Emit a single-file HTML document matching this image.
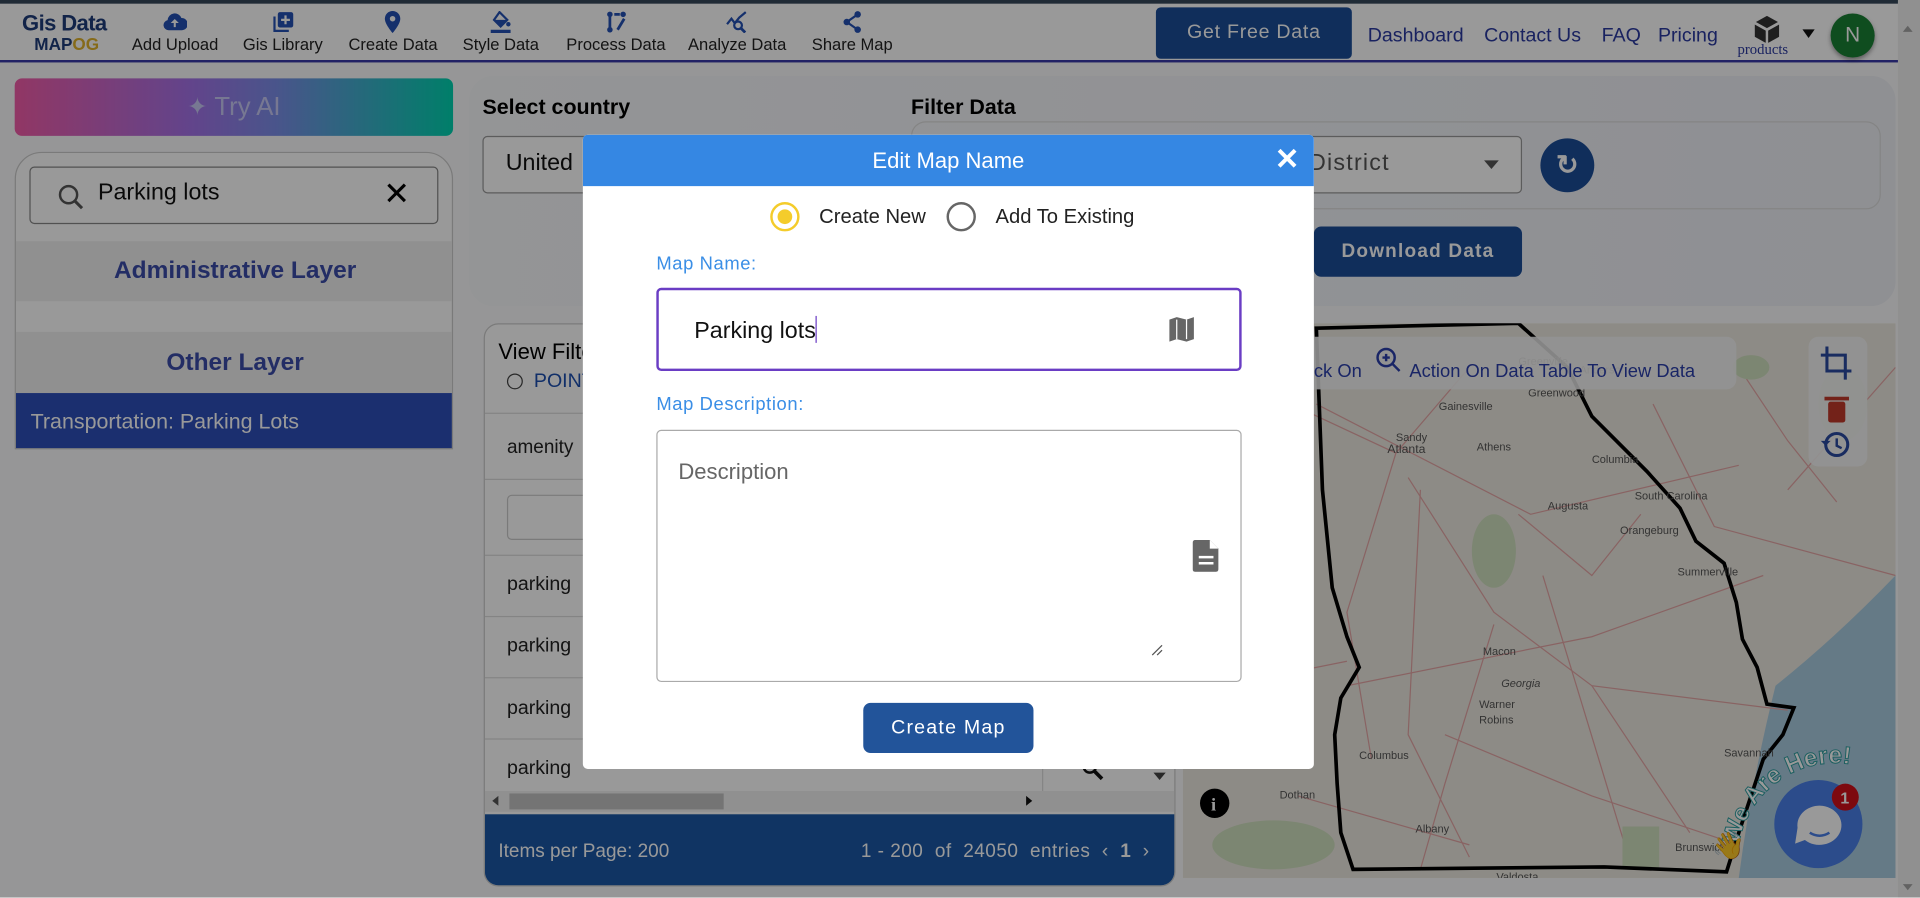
<!DOCTYPE html>
<html><head><meta charset="utf-8"><style>
*{box-sizing:border-box;margin:0;padding:0}
html,body{width:1920px;height:898px;overflow:hidden;background:#fff;font-family:"Liberation Sans",sans-serif}
#s{position:absolute;left:0;top:0;width:1568px;height:733px;transform:scale(1.22449);transform-origin:0 0;background:#fbfbfc}
.a{position:absolute}
.nav{left:0;top:0;width:1550px;height:51px;background:#fff;border-top:3px solid #36495a;border-bottom:2px solid #3a3aa8}
.ni{position:absolute;top:6px;text-align:center;font-size:13.5px;color:#222;white-space:nowrap;transform:translateX(-50%)}
.ni svg{display:block;margin:0 auto 2px}
.lk{position:absolute;top:18px;font-size:16px;color:#2b3aa0}
.ov{left:0;top:0;width:1568px;height:733px;background:rgba(0,0,0,.4)}
</style></head><body><div id="s">
<!-- NAV -->
<div class="a nav">
 <div class="a" style="left:18px;top:6px;font:bold 18px 'Liberation Sans Narrow','Liberation Sans',sans-serif;color:#1f3c7a;letter-spacing:-.5px">Gis Data</div>
 <div class="a" style="left:28px;top:25px;font:bold 14px 'Liberation Sans',sans-serif;color:#1f3c7a">MAP<span style="color:#e0b22c">OG</span></div>
 <div class="ni" style="left:143px"><svg width="20" height="18" viewBox="0 0 24 20"><path d="M6 18a5 5 0 0 1-1-9.9A7 7 0 0 1 18.5 6 5 5 0 0 1 19 18z" fill="#2451b5"/><path d="M12 7l-4 4h3v4h2v-4h3z" fill="#fff"/></svg>Add Upload</div>
 <div class="ni" style="left:231px"><svg width="18" height="18" viewBox="0 0 20 20"><rect x="5" y="1" width="14" height="14" rx="2" fill="#2451b5"/><path d="M2 5v13h13" stroke="#2451b5" stroke-width="2" fill="none"/><path d="M12 4v8M8 8h8" stroke="#fff" stroke-width="2"/></svg>Gis Library</div>
 <div class="ni" style="left:321px"><svg width="14" height="18" viewBox="0 0 14 20"><path d="M7 0a7 7 0 0 1 7 7c0 5-7 13-7 13S0 12 0 7a7 7 0 0 1 7-7z" fill="#2451b5"/><circle cx="7" cy="7" r="2.5" fill="#fff"/></svg>Create Data</div>
 <div class="ni" style="left:409px"><svg width="20" height="18" viewBox="0 0 20 20"><path d="M9 1l7 7-6 6-6-6z" fill="none" stroke="#2451b5" stroke-width="2"/><path d="M4 8h12l-6 6z" fill="#2451b5"/><circle cx="17" cy="12" r="2" fill="#2451b5"/><rect x="1" y="17" width="18" height="3" fill="#2451b5"/></svg>Style Data</div>
 <div class="ni" style="left:503px"><svg width="18" height="18" viewBox="0 0 20 20"><circle cx="4" cy="3" r="2.5" fill="#2451b5"/><circle cx="4" cy="17" r="2.5" fill="#2451b5"/><circle cx="16" cy="3" r="2.5" fill="#2451b5"/><path d="M4 5v10M8 3h5M17 7l-6 10" stroke="#2451b5" stroke-width="2.5"/></svg>Process Data</div>
 <div class="ni" style="left:602px"><svg width="20" height="18" viewBox="0 0 20 20"><path d="M1 12l4-5 3 4 4-5 6-5" stroke="#2451b5" stroke-width="2" fill="none"/><circle cx="11" cy="13" r="3.5" stroke="#2451b5" stroke-width="2" fill="none"/><path d="M13.5 15.5l4 4" stroke="#2451b5" stroke-width="2.5"/></svg>Analyze Data</div>
 <div class="ni" style="left:696px"><svg width="16" height="18" viewBox="0 0 18 20"><circle cx="14" cy="3" r="3" fill="#2451b5"/><circle cx="4" cy="10" r="3" fill="#2451b5"/><circle cx="14" cy="17" r="3" fill="#2451b5"/><path d="M14 3L4 10l10 7" stroke="#2451b5" stroke-width="2" fill="none"/></svg>Share Map</div>
 <div class="a" style="left:944px;top:3px;width:160px;height:42px;background:#1b4d98;border-radius:4px;color:#fff;font-size:16px;letter-spacing:.6px;text-align:center;line-height:42px">Get Free Data</div>
 <div class="lk" style="left:1117px">Dashboard</div><div class="lk" style="left:1212px">Contact Us</div><div class="lk" style="left:1308px">FAQ</div><div class="lk" style="left:1354px">Pricing</div>
 <svg class="a" style="left:1433px;top:10px" width="20" height="22" viewBox="0 0 20 22"><path d="M10 0l9 5-9 5-9-5z" fill="#333"/><path d="M0 7l9 5v10L0 17z" fill="#333"/><path d="M20 7l-9 5v10l9-5z" fill="#333"/></svg>
 <div class="a" style="left:1419px;top:30px;font:12px 'Liberation Serif',serif;color:#2b3aa0">products</div>
 <div class="a" style="left:1472px;top:21px;border:5px solid transparent;border-top:7px solid #111"></div>
 <div class="a" style="left:1495px;top:8px;width:36px;height:36px;border-radius:50%;background:#1a8034;color:#fff;font-size:17px;text-align:center;line-height:36px;box-shadow:0 2px 4px rgba(0,0,0,.4)">N</div>
</div>
<!-- scrollbar -->
<div class="a" style="left:1550px;top:0;width:18px;height:733px;background:#f1f1f1"></div>
<div class="a" style="left:1554px;top:17px;border:4px solid transparent;border-bottom:5px solid #a3a3a3"></div>
<div class="a" style="left:1554px;top:722px;border:4px solid transparent;border-top:5px solid #a3a3a3"></div>
<!-- LEFT -->
<div class="a" style="left:12px;top:64px;width:358px;height:47px;border-radius:6px;background:linear-gradient(90deg,#f25ca8,#a472e8 40%,#7a8ee8 60%,#00d3b0);color:#c6c8f4;font-size:21px;text-align:center;line-height:47px"><span style="font-size:20px">✦</span> Try AI</div>
<div class="a" style="left:12px;top:124px;width:358px;height:243px;border:1px solid #ccc;border-radius:22px 22px 0 0;background:#fff;overflow:hidden">
 <div class="a" style="left:11px;top:11px;width:334px;height:47px;border:1px solid #888;border-radius:4px"></div>
 <svg class="a" style="left:34px;top:25px" width="22" height="22" viewBox="0 0 22 22"><circle cx="9" cy="9" r="7" stroke="#555" stroke-width="2" fill="none"/><path d="M14 14l6 6" stroke="#555" stroke-width="2.5"/></svg>
 <div class="a" style="left:67px;top:22px;font-size:19px;color:#111">Parking lots</div>
 <div class="a" style="left:300px;top:18px;font-size:26px;color:#000">✕</div>
 <div class="a" style="left:0;top:72px;width:358px;height:49px;background:#f0f0f0;text-align:center;line-height:49px;font-size:20px;font-weight:bold;color:#3b4ca8">Administrative Layer</div>
 <div class="a" style="left:0;top:146px;width:358px;height:50px;background:#f0f0f0;text-align:center;line-height:50px;font-size:20px;font-weight:bold;color:#3b4ca8">Other Layer</div>
 <div class="a" style="left:0;top:196px;width:358px;height:46px;background:#2e4fba;color:#fff;font-size:17.5px;line-height:46px;padding-left:12px">Transportation: Parking Lots</div>
</div>
<!-- TOP MIDDLE -->
<div class="a" style="left:383px;top:62px;width:1165px;height:188px;border-radius:20px;background:linear-gradient(90deg,#f7f8fb,#eef0f6)"></div>
<div class="a" style="left:394px;top:77px;font-size:17.5px;font-weight:bold;color:#000">Select country</div>
<div class="a" style="left:394px;top:111px;width:200px;height:47px;border:1px solid #999;border-radius:4px;background:#fff;font-size:19px;padding:11px 18px;color:#111">United</div>
<div class="a" style="left:744px;top:77px;font-size:17.5px;font-weight:bold;color:#000">Filter Data</div>
<div class="a" style="left:744px;top:99px;width:792px;height:72px;border:1px solid #ddd;border-radius:12px"></div>
<div class="a" style="left:1060px;top:111px;width:183px;height:47px;border:1px solid #999;border-radius:4px;background:#fff;font-size:19px;padding:11px 8px;color:#555;letter-spacing:1px">District</div>
<div class="a" style="left:1212px;top:131px;border:6px solid transparent;border-top:7px solid #555"></div>
<div class="a" style="left:1258px;top:113px;width:44px;height:44px;border-radius:50%;background:#1b4d98;color:#fff;font-size:22px;text-align:center;line-height:44px;font-weight:bold">↻</div>
<div class="a" style="left:1073px;top:185px;width:170px;height:41px;border-radius:6px;background:#1b4d98;color:#fff;font-size:15.5px;font-weight:bold;letter-spacing:1px;text-align:center;line-height:41px">Download Data</div>
<!-- TABLE -->
<div class="a" style="left:395px;top:264px;width:565px;height:460px;border:1px solid #ccc;border-radius:12px;background:#fff;overflow:hidden">
 <div class="a" style="left:11px;top:12px;font-size:18px;color:#000">View Filter</div>
 <div class="a" style="left:18px;top:40px;width:13px;height:13px;border:1.5px solid #444;border-radius:50%"></div>
 <div class="a" style="left:40px;top:38px;font-size:16px;color:#1d4fb0">POINT</div>
 <div class="a" style="left:0;top:72px;width:565px;border-top:1px solid #ddd"></div>
 <div class="a" style="left:18px;top:92px;font-size:15.5px;color:#222">amenity</div>
 <div class="a" style="left:0;top:126px;width:565px;border-top:1px solid #ddd"></div>
 <div class="a" style="left:18px;top:139px;width:200px;height:37px;border:1px solid #ccc;border-radius:4px"></div>
 <div class="a" style="left:0;top:188px;width:565px;border-top:1px solid #ddd"></div>
 <div class="a" style="left:18px;top:204px;font-size:16px;color:#222">parking</div>
 <div class="a" style="left:0;top:238px;width:565px;border-top:1px solid #ddd"></div>
 <div class="a" style="left:18px;top:254px;font-size:16px;color:#222">parking</div>
 <div class="a" style="left:0;top:288px;width:565px;border-top:1px solid #ddd"></div>
 <div class="a" style="left:18px;top:305px;font-size:16px;color:#222">parking</div>
 <div class="a" style="left:0;top:338px;width:565px;border-top:1px solid #ddd"></div>
 <div class="a" style="left:18px;top:354px;font-size:16px;color:#222">parking</div>
 <div class="a" style="left:455px;top:338px;height:60px;border-left:1px solid #ddd"></div>
 <svg class="a" style="left:487px;top:356px" width="20" height="18" viewBox="0 0 20 18"><circle cx="7" cy="5" r="5" stroke="#111" stroke-width="2" fill="none"/><path d="M11 9l6 6" stroke="#111" stroke-width="3"/></svg>
 <div class="a" style="left:546px;top:366px;border:5px solid transparent;border-top:6px solid #444"></div>
 <div class="a" style="left:0;top:381px;width:565px;height:17px;background:#f1f1f1"></div>
 <div class="a" style="left:20px;top:383px;width:175px;height:13px;background:#c1c1c1"></div>
 <div class="a" style="left:6px;top:385px;border:4px solid transparent;border-right:5px solid #555;border-left:0"></div>
 <div class="a" style="left:442px;top:385px;border:4px solid transparent;border-left:5px solid #111;border-right:0"></div>
 <div class="a" style="left:0;top:400px;width:565px;height:60px;background:#1b58a6;color:#fff;font-size:15.5px">
  <div class="a" style="left:11px;top:22px">Items per Page: 200</div>
  <div class="a" style="left:307px;top:22px;letter-spacing:.4px">1 - 200 &nbsp;of &nbsp;24050 &nbsp;entries &nbsp;‹ &nbsp;<b>1</b> &nbsp;›</div>
 </div>
</div>
<!-- MAP -->
<svg class="a" style="left:966px;top:264px" width="582" height="453" viewBox="966 264 582 453">
 <rect x="966" y="264" width="582" height="453" fill="#ece8df"/>
 <path d="M1450 560 Q1500 520 1548 470 L1548 717 L1420 717 Q1430 640 1450 560z" fill="#a9cbe0"/>
 <g stroke="#e4a6a6" stroke-width="1" fill="none">
  <path d="M1075 330 L1250 420 L1420 380"/><path d="M1150 390 L1220 500 L1300 560 L1460 580"/><path d="M1100 560 L1300 520 L1440 470"/><path d="M1180 600 L1300 650 L1420 690"/><path d="M1160 400 L1150 600 L1200 700"/><path d="M1260 470 L1330 700"/><path d="M1350 330 L1400 430 L1548 470"/><path d="M1460 400 L1548 300"/><path d="M1060 650 L1200 690"/>
  <path d="M990 300 L1140 370 L1200 300"/><path d="M1140 370 L1100 500 L1120 620"/><path d="M1220 510 L1180 640 L1160 710"/><path d="M1000 560 L1100 540"/><path d="M1300 560 L1380 680"/><path d="M1240 420 L1300 470 L1340 420"/><path d="M1420 300 L1460 360 L1500 410"/>
 </g>
 <g fill="#cfe0bf"><ellipse cx="1220" cy="450" rx="18" ry="30"/><ellipse cx="1505" cy="330" rx="20" ry="30"/><rect x="1325" y="675" width="30" height="35"/><ellipse cx="1040" cy="690" rx="50" ry="20"/><ellipse cx="1000" cy="600" rx="25" ry="12"/><ellipse cx="1430" cy="300" rx="15" ry="10"/></g>
 <path d="M1075 268 L1240 264 L1280 300 L1300 340 L1345 385 L1372 415 L1385 442 L1408 460 L1418 492 L1423 522 L1435 545 L1443 575 L1465 578 L1456 600 L1440 620 L1430 650 L1420 680 L1410 712 L1310 708 L1105 710 L1095 680 L1092 640 L1090 600 L1095 570 L1110 545 L1100 520 L1088 480 L1080 400z" fill="none" stroke="#000" stroke-width="3"/>
 <g font-family="Liberation Sans,sans-serif" font-size="10" fill="#555">
  <text x="1133" y="370">Atlanta</text><text x="1206" y="368" font-size="9">Athens</text><text x="1175" y="335" font-size="9">Gainesville</text><text x="1140" y="360" font-size="9">Sandy</text><text x="1248" y="324" font-size="9">Greenwood</text><text x="1290" y="305" font-size="9">Anderson</text><text x="1300" y="378" font-size="9">Columbia</text><text x="1335" y="408" font-size="9">South Carolina</text><text x="1323" y="436" font-size="9">Orangeburg</text><text x="1370" y="470" font-size="9">Summerville</text><text x="1264" y="416" font-size="9">Augusta</text><text x="1211" y="535" font-size="9">Macon</text><text x="1226" y="561" font-size="9" font-style="italic">Georgia</text><text x="1208" y="578" font-size="9">Warner</text><text x="1208" y="591" font-size="9">Robins</text><text x="1110" y="620" font-size="9">Columbus</text><text x="1156" y="680" font-size="9">Albany</text><text x="1045" y="652" font-size="9">Dothan</text><text x="1222" y="719" font-size="9">Valdosta</text><text x="1408" y="618" font-size="9">Savannah</text><text x="1368" y="695" font-size="9">Brunswick</text><text x="1240" y="298" font-size="9">Greenville</text>
 </g>
 <rect x="1040" y="275" width="378" height="43" rx="8" fill="#f5f5f5" opacity=".9"/>
 <text x="1073" y="308" font-family="Liberation Sans,sans-serif" font-size="15" fill="#2b3eaa">ck On</text>
 <circle cx="1132" cy="292" r="7" stroke="#2b3eaa" stroke-width="2" fill="none"/><path d="M1137 297l6 6M1129 292h6M1132 289v6" stroke="#2b3eaa" stroke-width="2"/>
 <text x="1151" y="308" font-family="Liberation Sans,sans-serif" font-size="15" fill="#2b3eaa">Action On Data Table To View Data</text>
 <rect x="1477" y="275" width="48" height="106" rx="8" fill="#f5f5f5" opacity=".9"/>
 <path d="M1492 283v20h20M1487 290h20v20" stroke="#2b4aa0" stroke-width="2.5" fill="none"/>
 <rect x="1493" y="328" width="14" height="17" rx="2" fill="#c0392b"/><rect x="1490" y="324" width="20" height="3" fill="#c0392b"/>
 <circle cx="1500" cy="363" r="9" stroke="#2b4aa0" stroke-width="2.5" fill="none"/><path d="M1500 358v6l4 2" stroke="#2b4aa0" stroke-width="2" fill="none"/><path d="M1487 360l4 4 4-4" fill="#2b4aa0"/>
 <circle cx="992" cy="656" r="12" fill="#000"/><text x="989" y="662" font-family="Liberation Serif,serif" font-weight="bold" font-size="15" fill="#fff">i</text>
 <circle cx="1485" cy="673" r="36" fill="#4a7fe8"/>
 <path d="M1468 676a18 16 0 1 1 6 10l-8 3z" fill="#fff"/><path d="M1478 680q8 5 16 0" stroke="#4a7fe8" stroke-width="2" fill="none"/>
 <circle cx="1507" cy="651" r="11" fill="#d0101a"/><text x="1503" y="656" font-family="Liberation Sans,sans-serif" font-size="13" font-weight="bold" fill="#fff">1</text>
 <path id="cv" d="M1420 690 A80 80 0 0 1 1548 640" fill="none"/>
 <text font-family="Liberation Sans,sans-serif" font-size="20" font-weight="bold" fill="#fff" stroke="#2f9fa0" stroke-width=".8"><textPath href="#cv">We Are Here!</textPath></text>
 <text x="1398" y="698" font-size="22">👋</text>
</svg>
<!-- overlay -->
<div class="a ov"></div>
<!-- MODAL -->
<div class="a" style="left:476px;top:110px;width:597px;height:518px;background:#fff;border-radius:4px;overflow:hidden">
 <div class="a" style="left:0;top:0;width:597px;height:42px;background:#3587e3;color:#fff;font-size:18px;text-align:center;line-height:42px">Edit Map Name</div>
 <div class="a" style="left:565px;top:6px;color:#fff;font-size:24px;font-weight:bold">✕</div>
 <div class="a" style="left:153px;top:55px;width:24px;height:24px;border:2px solid #f4cc2b;border-radius:50%"><div style="margin:4px;width:12px;height:12px;border-radius:50%;background:#f4cc2b"></div></div>
 <div class="a" style="left:193px;top:58px;font-size:16.5px;color:#222">Create New</div>
 <div class="a" style="left:297px;top:55px;width:24px;height:24px;border:2px solid #666;border-radius:50%"></div>
 <div class="a" style="left:337px;top:58px;font-size:16.5px;color:#222">Add To Existing</div>
 <div class="a" style="left:60px;top:97px;font-size:15px;color:#3a8ee6;letter-spacing:.5px">Map Name:</div>
 <div class="a" style="left:60px;top:125px;width:478px;height:68px;border:2px solid #6a3dc4;border-radius:4px"></div>
 <div class="a" style="left:91px;top:148px;font-size:19px;color:#111">Parking lots<span style="display:inline-block;width:1px;height:22px;background:#6a3dc4;vertical-align:-4px"></span></div>
 <svg class="a" style="left:478px;top:148px" width="22" height="22" viewBox="0 0 22 22"><path d="M1 3l6-2 8 2 6-2v18l-6 2-8-2-6 2z" fill="#666"/><path d="M7 3v16M15 3v16" stroke="#fff" stroke-width="1"/></svg>
 <div class="a" style="left:60px;top:212px;font-size:15px;color:#3a8ee6;letter-spacing:.5px">Map Description:</div>
 <div class="a" style="left:60px;top:241px;width:478px;height:206px;border:1px solid #aaa;border-radius:4px"></div>
 <div class="a" style="left:78px;top:265px;font-size:18px;color:#666">Description</div>
 <svg class="a" style="left:498px;top:331px" width="22" height="26" viewBox="0 0 22 26"><path d="M2 0h12l7 7v17a2 2 0 0 1-2 2H2a2 2 0 0 1-2-2V2a2 2 0 0 1 2-2z" fill="#666"/><path d="M14 0v7h7" fill="#fff"/><path d="M5 14h12M5 19h12" stroke="#fff" stroke-width="2"/></svg>
 <svg class="a" style="left:463px;top:415px" width="12" height="12"><path d="M2 10L10 2M6 10l4-4" stroke="#555"/></svg>
 <div class="a" style="left:229px;top:464px;width:139px;height:41px;background:#22549a;border-radius:6px;color:#fff;font-size:16px;letter-spacing:1px;text-align:center;line-height:41px">Create Map</div>
</div>
</div></body></html>
